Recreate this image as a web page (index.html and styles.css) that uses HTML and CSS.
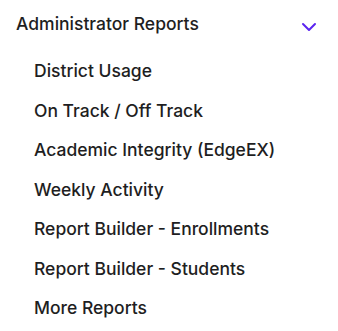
FILE: index.html
```html
<!DOCTYPE html>
<html lang="en">
<head>
    <meta charset="UTF-8">
    <meta name="viewport" content="width=device-width, initial-scale=1.0">
    <title>Administrator Reports</title>
    <link rel="stylesheet" href="styles.css">
</head>
<body>
    <div class="menu">
        <div class="menu-header">
            <span class="menu-title">Administrator Reports</span>
            <svg class="chevron" width="16" height="10" viewBox="0 0 16 10">
                <path d="M2 2 L8 8 L14 2" fill="none" stroke="#5b25f0" stroke-width="2" stroke-linecap="round" stroke-linejoin="round"/>
            </svg>
        </div>
        <ul class="menu-list">
            <li class="menu-item">District Usage</li>
            <li class="menu-item">On Track / Off Track</li>
            <li class="menu-item">Academic Integrity (EdgeEX)</li>
            <li class="menu-item">Weekly Activity</li>
            <li class="menu-item">Report Builder - Enrollments</li>
            <li class="menu-item">Report Builder - Students</li>
            <li class="menu-item">More Reports</li>
        </ul>
    </div>
</body>
</html>
```

FILE: styles.css
```css
body {
    margin: 0;
    background-color: #fff;
    color: #1e1e22;
    font-family: Inter, "Noto Sans", sans-serif;
}

.menu {
    width: 338px;
}

.menu-header {
    display: flex;
    justify-content: space-between;
    align-items: center;
    height: 46px;
    padding: 0 21px 0 16px;
}

.menu-title {
    font-size: 17.5px;
    font-weight: 500;
}

.chevron {
    margin-top: 8px;
}

.menu-list {
    list-style: none;
    margin: 5px 0 0;
    padding: 0 0 0 34px;
}

.menu-item {
    font-size: 17.5px;
    font-weight: 500;
    line-height: 39.5px;
    cursor: pointer;
}
```
